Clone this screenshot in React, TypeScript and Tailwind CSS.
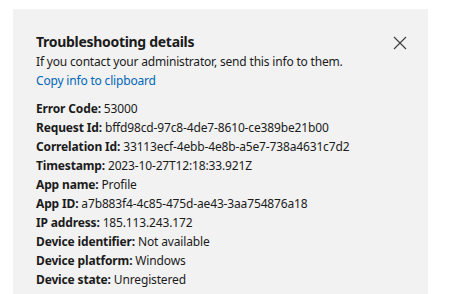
const rows: [string, string][] = [
  ["Error Code:", "53000"],
  ["Request Id:", "bffd98cd-97c8-4de7-8610-ce389be21b00"],
  ["Correlation Id:", "33113ecf-4ebb-4e8b-a5e7-738a4631c7d2"],
  ["Timestamp:", "2023-10-27T12:18:33.921Z"],
  ["App name:", "Profile"],
  ["App ID:", "a7b883f4-4c85-475d-ae43-3aa754876a18"],
  ["IP address:", "185.113.243.172"],
  ["Device identifier:", "Not available"],
  ["Device platform:", "Windows"],
  ["Device state:", "Unregistered"],
];

export default function App() {
  return (
    <div className="w-[471px] h-[294px] overflow-hidden bg-white pt-[9px] pl-[13px] font-['Noto_Sans',sans-serif] text-[#1b1b1b]">
      <div className="w-[415px] h-[285px] bg-[#f2f2f2] pl-[23px] pr-[21px] pt-[23px]">
        {/* Header */}
        <div className="flex items-start justify-between">
          <h2 className="text-[14px] leading-[20px] font-bold tracking-[-0.3px]">Troubleshooting details</h2>
          <button className="mt-[4px] text-[#3b3b3b]">
            <svg width="14" height="14" viewBox="0 0 14 14" fill="none" stroke="currentColor" strokeWidth="1.1">
              <path d="M1 1L13 13M13 1L1 13" />
            </svg>
          </button>
        </div>
        <p className="text-[12px] leading-[19px] tracking-[-0.18px]">If you contact your administrator, send this info to them.</p>
        <a className="block text-[12px] leading-[19px] tracking-[-0.18px] text-[#0067b8] cursor-pointer">Copy info to clipboard</a>

        {/* Details */}
        <div className="mt-[9px] flex flex-col">
          {rows.map(([k, v]) => (
            <div key={k} className="text-[12px] leading-[19px] tracking-[-0.15px] whitespace-nowrap">
              <span className="font-bold">{k}</span> {v}
            </div>
          ))}
        </div>
      </div>
    </div>
  );
}
